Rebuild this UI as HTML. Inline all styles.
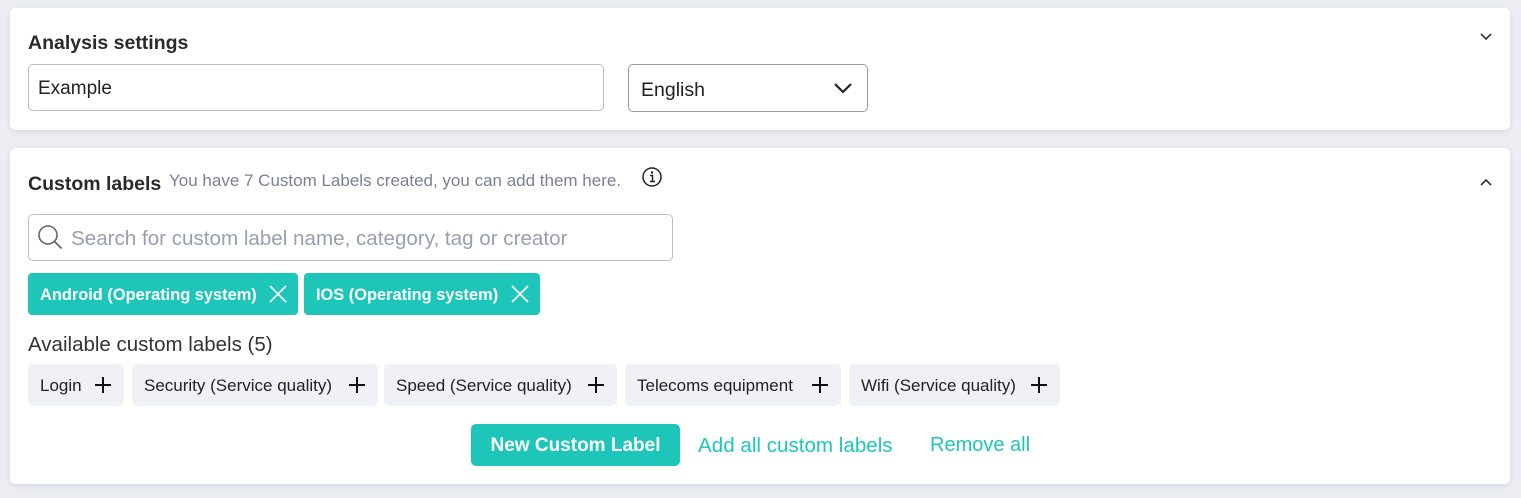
<!DOCTYPE html>
<html><head><style>
*{box-sizing:border-box;margin:0;padding:0}
body{width:1521px;height:498px;background:#eceef4;font-family:"Liberation Sans",sans-serif;position:relative;overflow:hidden;color:#222}
.card{position:absolute;left:10px;width:1500px;background:#fff;border-radius:6px;box-shadow:0 2px 6px rgba(60,70,100,.12)}
.a{position:absolute;white-space:nowrap}
.inp{position:absolute;border:1px solid #b9bcc4;border-radius:5px;background:#fff}
.chip{position:absolute;top:364px;height:42px;background:#f0f1f7;border-radius:5px;font-size:17px;color:#222;padding-left:12px;line-height:43px;white-space:nowrap}
.chip svg{position:absolute;right:12px;top:12px}
.tag{position:absolute;top:273px;height:42px;background:#1ec6b9;border-radius:4px;color:#fff;font-weight:bold;font-size:16.4px;line-height:44px;padding-left:12px;white-space:nowrap}
.tag svg{position:absolute;right:11px;top:12px}
</style></head><body>
<div class="card" style="top:8px;height:122px"></div>
<div class="card" style="top:148px;height:336px"></div>

<div class="a" style="left:28px;top:32px;font-size:19.5px;font-weight:bold;color:#2a2a2a">Analysis settings</div>
<svg class="a" style="left:1479px;top:32px" width="14" height="10" viewBox="0 0 14 10"><path d="M2 2l5 5 5-5" fill="none" stroke="#333" stroke-width="1.6"/></svg>
<div class="inp" style="left:28px;top:64px;width:576px;height:47px"></div>
<div class="a" style="left:38px;top:78px;font-size:19px;color:#222">Example</div>
<div class="inp" style="left:628px;top:64px;width:240px;height:48px;border-color:#999"></div>
<div class="a" style="left:641px;top:79px;font-size:19.5px;color:#222">English</div>
<svg class="a" style="left:832px;top:80px" width="22" height="16" viewBox="0 0 22 16"><path d="M3 4l8 8 8-8" fill="none" stroke="#222" stroke-width="2.2"/></svg>

<div class="a" style="left:28px;top:173px;font-size:19.5px;font-weight:bold;color:#2a2a2a">Custom labels</div>
<div class="a" style="left:169px;top:171px;font-size:17px;color:#7b8093">You have 7 Custom Labels created, you can add them here.</div>
<svg class="a" style="left:641px;top:166px" width="22" height="22" viewBox="0 0 22 22"><circle cx="11" cy="11" r="9" fill="none" stroke="#222" stroke-width="1.5"/><circle cx="11" cy="6.5" r="1.2" fill="#222"/><path d="M9 9.5h2.5v6M9 15.5h5" fill="none" stroke="#222" stroke-width="1.5"/></svg>
<svg class="a" style="left:1479px;top:178px" width="14" height="10" viewBox="0 0 14 10"><path d="M2 7l5-5 5 5" fill="none" stroke="#333" stroke-width="1.6"/></svg>

<div class="inp" style="left:28px;top:214px;width:645px;height:47px"></div>
<svg class="a" style="left:36px;top:223px" width="30" height="30" viewBox="0 0 30 30"><circle cx="12" cy="12" r="9" fill="none" stroke="#666" stroke-width="1.6"/><path d="M18.5 18.5l7 7" stroke="#666" stroke-width="1.8"/></svg>
<div class="a" style="left:71px;top:227px;font-size:20.6px;color:#9a9fb0">Search for custom label name, category, tag or creator</div>

<div class="tag" style="left:28px;width:270px">Android (Operating system)<svg width="18" height="18" viewBox="0 0 18 18"><path d="M1 1l16 16M17 1L1 17" stroke="#fff" stroke-width="1.6"/></svg></div>
<div class="tag" style="left:304px;width:236px">IOS (Operating system)<svg width="18" height="18" viewBox="0 0 18 18"><path d="M1 1l16 16M17 1L1 17" stroke="#fff" stroke-width="1.6"/></svg></div>

<div class="a" style="left:28px;top:333px;font-size:20.5px;color:#333">Available custom labels (5)</div>

<div class="chip" style="left:28px;width:96px">Login<svg width="18" height="18" viewBox="0 0 18 18"><path d="M9 1v16M1 9h16" stroke="#111" stroke-width="2"/></svg></div>
<div class="chip" style="left:132px;width:246px">Security (Service quality)<svg width="18" height="18" viewBox="0 0 18 18"><path d="M9 1v16M1 9h16" stroke="#111" stroke-width="2"/></svg></div>
<div class="chip" style="left:384px;width:233px">Speed (Service quality)<svg width="18" height="18" viewBox="0 0 18 18"><path d="M9 1v16M1 9h16" stroke="#111" stroke-width="2"/></svg></div>
<div class="chip" style="left:625px;width:216px">Telecoms equipment<svg width="18" height="18" viewBox="0 0 18 18"><path d="M9 1v16M1 9h16" stroke="#111" stroke-width="2"/></svg></div>
<div class="chip" style="left:849px;width:211px">Wifi (Service quality)<svg width="18" height="18" viewBox="0 0 18 18"><path d="M9 1v16M1 9h16" stroke="#111" stroke-width="2"/></svg></div>

<div class="a" style="left:471px;top:424px;width:209px;height:42px;background:#1ec6b9;border-radius:5px;color:#fff;font-weight:bold;font-size:19px;line-height:43px;text-align:center">New Custom Label</div>
<div class="a" style="left:698px;top:434px;font-size:20.6px;color:#1ec6b9">Add all custom labels</div>
<div class="a" style="left:930px;top:434px;font-size:20px;color:#1ec6b9">Remove all</div>
</body></html>
